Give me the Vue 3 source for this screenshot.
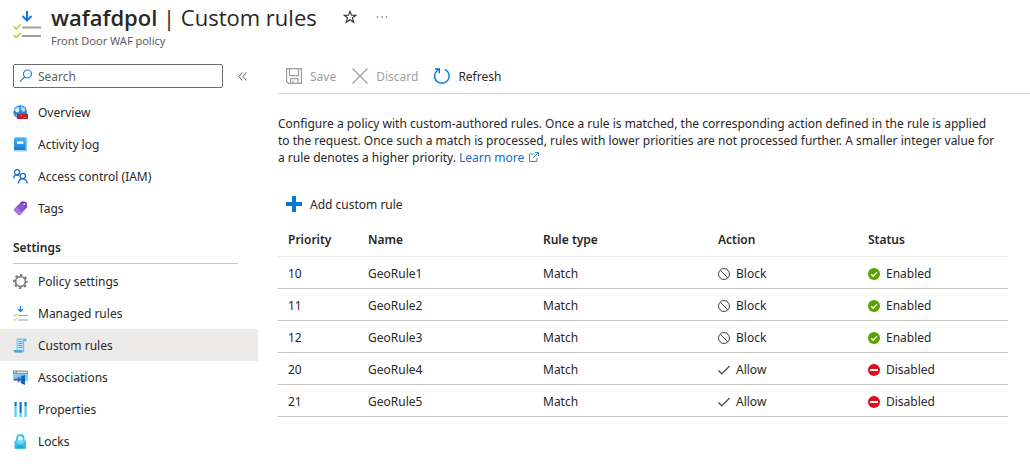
<script setup>
import { ref } from 'vue'

const search = ref('')

const general = [
  { label: 'Overview', icon: 'overview' },
  { label: 'Activity log', icon: 'log' },
  { label: 'Access control (IAM)', icon: 'iam' },
  { label: 'Tags', icon: 'tag' },
]
const settings = [
  { label: 'Policy settings', icon: 'gear' },
  { label: 'Managed rules', icon: 'managed' },
  { label: 'Custom rules', icon: 'custom', active: true },
  { label: 'Associations', icon: 'assoc' },
  { label: 'Properties', icon: 'props' },
  { label: 'Locks', icon: 'lock' },
]
const groups = [
  { title: '', items: general },
  { title: 'Settings', items: settings },
]
const rules = [
  { priority: 10, name: 'GeoRule1', type: 'Match', action: 'Block', status: 'Enabled' },
  { priority: 11, name: 'GeoRule2', type: 'Match', action: 'Block', status: 'Enabled' },
  { priority: 12, name: 'GeoRule3', type: 'Match', action: 'Block', status: 'Enabled' },
  { priority: 20, name: 'GeoRule4', type: 'Match', action: 'Allow', status: 'Disabled' },
  { priority: 21, name: 'GeoRule5', type: 'Match', action: 'Allow', status: 'Disabled' },
]
</script>

<template>
  <div class="page">
    <header class="header">
      <svg class="header-icon" viewBox="0 0 28 28" fill="none">
        <path d="M14 1v9M9.500 6l4.500 4.500L18.500 6" stroke="#0f78d4" stroke-width="2" />
        <path d="M9 17.500h19M9 26h19" stroke="#a0a0a0" stroke-width="2" />
        <path d="M.7 16.500l2.500 2.500 4.500-4.500M.7 25l2.500 2.500 4.500-4.500" stroke="#b4d335" stroke-width="1.600" />
      </svg>
      <div class="heading">
        <div class="title-row">
          <h1><strong>wafafdpol</strong> | Custom rules</h1>
          <button class="icon-btn star" type="button" aria-label="Favorite">
            <svg width="14" height="14" viewBox="0 0 14 14" fill="none" stroke="#323130" stroke-width="1.100">
              <path d="M7 1.300l1.500 4h4.300L9.400 8l1.300 4.300L7 9.700l-3.700 2.600L4.600 8 1.200 5.300h4.300z" />
            </svg>
          </button>
          <button class="icon-btn" type="button" aria-label="More">
            <svg width="12" height="4" viewBox="0 0 12 4" fill="#605e5c">
              <circle cx="1.500" cy="2" r=".8" /><circle cx="6" cy="2" r=".8" /><circle cx="10.500" cy="2" r=".8" />
            </svg>
          </button>
        </div>
        <p class="subtitle">Front Door WAF policy</p>
      </div>
    </header>

    <div class="body">
      <aside class="sidebar">
        <div class="search-row">
          <label class="search">
            <svg width="14" height="14" viewBox="0 0 14 14" fill="none" stroke="#1f7fd6" stroke-width="1.200">
              <circle cx="8.500" cy="5" r="4" /><path d="M5.600 7.900L1 12.600" />
            </svg>
            <input v-model="search" type="text" placeholder="Search" aria-label="Search">
          </label>
          <button class="icon-btn" type="button" aria-label="Collapse menu">
            <svg width="9" height="9" viewBox="0 0 9 9" fill="none" stroke="#605e5c">
              <path d="M4.300.5l-3.500 4 3.500 4M8.300.5l-3.500 4 3.500 4" />
            </svg>
          </button>
        </div>

        <nav v-for="g in groups" :key="g.title">
          <h2 v-if="g.title" class="group-title">{{ g.title }}</h2>
          <a v-for="item in g.items" :key="item.label" href="#" class="nav-item" :class="{ active: item.active }">
            <svg v-if="item.icon === 'overview'" class="nav-icon" viewBox="0 0 15 15" fill="none">
              <circle cx="7.200" cy="7" r="6.800" fill="#1b86dc" />
              <path d="M1 5l3-3.500 3 1-2 3-3 1zM8 1l4 2-1.500 3-3-1.500z" fill="#9bd3fa" />
              <circle cx="4.500" cy="5.500" r="2" fill="#d8effd" />
              <circle cx="10.500" cy="5" r="1.800" fill="#b9e1fc" />
              <path d="M1.500 9.500l4 .5-.5 3z" fill="#7cc3f6" />
              <path d="M4 8.800h11V14H4z" fill="#d0242a" />
              <path d="M4 11.200h3M9.500 8.800v2.400h5.500M8 14v-2.500M12 14v-2.500" stroke="#a3141b" stroke-width=".7" />
              <path d="M7.500 10.200l1.500 1M11.500 12.500h1.500" stroke="#f5a3a5" stroke-width=".8" />
            </svg>
            <svg v-else-if="item.icon === 'log'" class="nav-icon" viewBox="0 0 15 15" fill="none">
              <defs>
                <linearGradient id="logFill" x1="0" y1="0" x2="0" y2="1">
                  <stop stop-color="#52b4f0" /><stop offset="1" stop-color="#0b78d2" />
                </linearGradient>
              </defs>
              <rect x="2.500" y=".5" width="11.500" height="14" rx="1" fill="#7cc6f2" />
              <path d="M1 1.500Q1 .5 2 .5h10.500V14H2.500Q1 14 1 12.800z" fill="url(#logFill)" />
              <path d="M1.500 13.500h11.500" stroke="#d4ecfa" stroke-width=".8" />
              <rect x="4" y="4.500" width="6.500" height="2.200" rx=".5" fill="#fff" />
            </svg>
            <svg v-else-if="item.icon === 'iam'" class="nav-icon" viewBox="0 0 15 15" fill="none" stroke="#1a6fd8" stroke-width="1.300">
              <circle cx="4" cy="3.200" r="2.500" /><path d="M.6 9.500Q.8 6 4 5.800q1.500 0 2.300.8" />
              <circle cx="9.700" cy="7" r="2.700" /><path d="M5.500 14.500q.3-4.700 4.200-4.700t4.500 4.700" />
            </svg>
            <svg v-else-if="item.icon === 'tag'" class="nav-icon" viewBox="0 0 15 15" fill="none">
              <path d="M1 8.200L8 1q.6-.6 1.500-.5l3.200.4q1 .1 1 1v4.300q0 .8-.6 1.400L7 14q-.7.600-1.300 0L1 9.600q-.6-.7 0-1.400z" fill="#8b55d4" />
              <path d="M1 9.600L5.700 14q.6.600 1.300 0l2.500-2.500L3.500 6z" fill="#a779e0" />
              <path d="M7.500 1.500L13 7l.7-1V2q0-1-1-1.100L9.500.5z" fill="#6c38b8" />
              <circle cx="11.200" cy="3.300" r="1" fill="#efe5fb" />
            </svg>
            <svg v-else-if="item.icon === 'gear'" class="nav-icon" viewBox="0 0 15 15" fill="none">
              <circle cx="7.500" cy="7.500" r="6.400" stroke="#7a7a7a" stroke-width="2" stroke-dasharray="2.513 2.513" stroke-dashoffset="1.256" />
              <circle cx="7.500" cy="7.500" r="4.900" stroke="#808080" stroke-width="1.700" />
            </svg>
            <svg v-else-if="item.icon === 'managed'" class="nav-icon" viewBox="0 0 15 15" fill="none">
              <path d="M7.500 0v5.300M5 3l2.500 2.500L10 3" stroke="#0f78d4" stroke-width="1.200" />
              <path d="M5 9.500h10M5 14h10" stroke="#a0a0a0" />
              <path d="M.4 8.700l1.500 1.500 2.300-2.300M.4 13l1.500 1.500 2.300-2.300" stroke="#b4d335" />
            </svg>
            <svg v-else-if="item.icon === 'custom'" class="nav-icon" viewBox="0 0 15 15" fill="none">
              <path d="M3.500.5H12q-.8.600-.8 2v10.500q0 1.500-1.500 1.500H2.500q1-.5 1-2z" fill="#7cc4e6" />
              <path d="M4.500 2h5.500v10H4.500z" fill="#bfe6f7" />
              <path d="M5.500 3.500h4M5.500 5.500h4M5.500 7.500h4M5.500 9.500h4" stroke="#3c9bc8" stroke-width=".9" />
              <path d="M12 .5q1.700 0 1.700 1.500 0 1.300-1.500 1.300h-1V2q0-1.500.8-1.500z" fill="#4fa9d3" />
              <path d="M.5 12h8.200q-.3 2.500 1.300 2.500H2.300Q.5 14.500.5 12z" fill="#4aa8d4" />
            </svg>
            <svg v-else-if="item.icon === 'assoc'" class="nav-icon" viewBox="0 0 15 15" fill="none">
              <path d="M0 1h15v10H0z" fill="#86ccee" />
              <path d="M0 .5h15V4H0z" fill="#8c969d" />
              <path d="M1 1.700h1.500v1H1zM4 1.700h10v1H4z" fill="#fff" />
              <path d="M7.500 5.500H12V13H7.500z" fill="#2a8fe0" />
              <path d="M8.500 6.500L12 5v10l-3.500-1.500z" fill="#0a62bd" />
              <path d="M1 9.500h6M4.700 7l2.500 2.500L4.700 12" stroke="#7b3fa8" stroke-width="1.300" />
            </svg>
            <svg v-else-if="item.icon === 'props'" class="nav-icon" viewBox="0 0 15 15">
              <path d="M1.500 5h2.200v10H1.500zM6.500 12h2.200v3H6.500zM11.500 5h2.200v10h-2.200z" fill="#45d3f2" />
              <path d="M1.500 0h2.200v4.500H1.500zM6.500 0h2.200v11.500H6.500zM11.500 0h2.200v4.500h-2.200z" fill="#0b76d3" />
            </svg>
            <svg v-else class="nav-icon" viewBox="0 0 15 15" fill="none">
              <path d="M4 7V4.500Q4 1 7.300 1t3.300 3.500V7" stroke="#3fc4e6" stroke-width="1.900" />
              <rect x="1.500" y="6.500" width="11.500" height="8.300" rx=".7" fill="#35bfe6" />
              <path d="M1.500 7l5.800 4L13 7z" fill="#63dbf5" />
              <path d="M1.700 14.500l5.600-4 5.500 4z" fill="#22a7d6" />
            </svg>
            <span>{{ item.label }}</span>
          </a>
        </nav>
      </aside>

      <main class="content">
        <div class="toolbar">
          <button class="cmd" type="button" disabled>
            <svg width="16" height="16" viewBox="0 0 16 16" fill="none" stroke="#a19f9d" stroke-width="1.200">
              <path d="M.6.600h14.800v14.800H2.600l-2-2zM3.500.600v7h9v-7M4.500 15.400v-4.800h7.500v4.800M7 12.500v2.500" />
            </svg>
            <span>Save</span>
          </button>
          <button class="cmd" type="button" disabled>
            <svg width="16" height="16" viewBox="0 0 16 16" fill="none" stroke="#a19f9d" stroke-width="1.300">
              <path d="M.5.500l15 15M15.500.500l-15 15" />
            </svg>
            <span>Discard</span>
          </button>
          <button class="cmd" type="button">
            <svg width="16" height="18" viewBox="0 0 16 18" fill="none" stroke="#0078d4" stroke-width="1.400">
              <path d="M10.800 2.300A7.300 7.300 0 1 1 4.500 2.500M1 2h4.300v4.300" />
            </svg>
            <span>Refresh</span>
          </button>
        </div>

        <p class="intro">
          Configure a policy with custom-authored rules. Once a rule is matched, the corresponding action defined in the rule is applied to the request. Once such a match is processed, rules with lower priorities are not processed further. A smaller integer value for a rule denotes a higher priority.
          <a href="#" class="learn">Learn more<svg width="10" height="10" viewBox="0 0 10 10" fill="none" stroke="#3f86dc">
            <path d="M4 2H.5v7.500H8V6M6 .5h3.500V4M9.500.500L4 6" />
          </svg></a>
        </p>

        <button class="add" type="button">
          <svg width="16" height="16" viewBox="0 0 16 16" fill="#0078d4"><path d="M6 0h4v6h6v4h-6v6H6v-6H0V6h6z" /></svg>
          <span>Add custom rule</span>
        </button>

        <table>
          <colgroup><col class="c-priority"><col class="c-wide"><col class="c-wide"><col class="c-mid"><col></colgroup>
          <thead>
            <tr><th>Priority</th><th>Name</th><th>Rule type</th><th>Action</th><th>Status</th></tr>
          </thead>
          <tbody>
            <tr v-for="r in rules" :key="r.priority">
              <td>{{ r.priority }}</td>
              <td>{{ r.name }}</td>
              <td>{{ r.type }}</td>
              <td>
                <span class="cell">
                  <svg v-if="r.action === 'Block'" width="12" height="12" viewBox="0 0 12 12" fill="none" stroke="#484644">
                    <circle cx="6" cy="6" r="5.500" /><path d="M2.100 2.100l7.800 7.800" />
                  </svg>
                  <svg v-else width="12" height="12" viewBox="0 0 12 12" fill="none" stroke="#484644" stroke-width="1.200">
                    <path d="M.4 6.500l3.400 3.300L11.600 2" />
                  </svg>
                  {{ r.action }}
                </span>
              </td>
              <td>
                <span class="cell">
                  <svg v-if="r.status === 'Enabled'" width="12" height="12" viewBox="0 0 12 12" fill="none">
                    <circle cx="6" cy="6" r="6" fill="#57a300" /><path d="M3.200 6.200l2 2 3.700-4" stroke="#fff" stroke-width="1.500" />
                  </svg>
                  <svg v-else width="12" height="12" viewBox="0 0 12 12">
                    <circle cx="6" cy="6" r="6" fill="#e00b1c" /><path d="M2 5h8v2H2z" fill="#fff" />
                  </svg>
                  {{ r.status }}
                </span>
              </td>
            </tr>
          </tbody>
        </table>
      </main>
    </div>
  </div>
</template>

<style>
body {
  background: #fff;
}
</style>

<style scoped>
.page {
  font: 12px/16px "Noto Sans", "Open Sans", sans-serif;
  color: #292827;
}
svg {
  display: block;
  flex: none;
}
button {
  font: inherit;
  color: inherit;
  background: none;
  border: 0;
  padding: 0;
}
a {
  color: inherit;
  text-decoration: none;
}
.header {
  display: flex;
  gap: 10px;
  height: 64px;
  padding-left: 13px;
}
.header-icon {
  width: 28px;
  height: 28px;
  margin-top: 10px;
}
.title-row {
  display: flex;
  align-items: center;
  height: 34px;
}
h1 {
  margin: 0;
  font-family: "Open Sans", "Noto Sans", sans-serif;
  font-size: 22px;
  line-height: 34px;
  font-weight: 400;
  white-space: nowrap;
}
h1 strong {
  font-weight: 600;
}
.star {
  margin: 0 19px 0 26px;
}
.subtitle {
  margin: 0;
  font-size: 11px;
  line-height: 14px;
  color: #605e5c;
}
.body {
  display: flex;
}
.sidebar {
  width: 258px;
  flex: none;
}
.search-row {
  display: flex;
  align-items: center;
  gap: 15px;
  padding: 0 0 8px 13px;
}
.search {
  display: flex;
  align-items: center;
  gap: 5px;
  width: 210px;
  height: 24px;
  box-sizing: border-box;
  border: 1px solid #6f6d6b;
  border-radius: 2px;
  padding: 0 5px;
}
.search input {
  flex: 1;
  min-width: 0;
  border: 0;
  padding: 2px 0 0;
  outline: none;
  background: none;
  font: inherit;
  color: inherit;
}
.search input::placeholder {
  color: #605e5c;
  opacity: 1;
}
.group-title {
  margin: 0 20px 1px 13px;
  padding: 16px 0 7px;
  border-bottom: 1px solid #c8c6c4;
  font-size: 12px;
  line-height: 16px;
  font-weight: 600;
}
.nav-item {
  display: flex;
  align-items: center;
  gap: 10px;
  height: 32px;
  padding-left: 13px;
}
.nav-item span,
.cmd span,
.add span {
  padding-top: 2px;
}
.nav-item.active {
  background: #edebe9;
}
.nav-icon {
  width: 15px;
  height: 15px;
}
.content {
  flex: 1;
  min-width: 0;
  padding-left: 20px;
}
.toolbar {
  display: flex;
  gap: 16px;
  height: 29px;
  padding-left: 8px;
  align-items: flex-start;
  border-bottom: 1px solid #d2d0ce;
}
.cmd,
.add {
  display: flex;
  align-items: center;
  gap: 8px;
  height: 24px;
}
.cmd:disabled {
  color: #a19f9d;
}
.intro {
  margin: 21px 32px 0 0;
  line-height: 17px;
}
.learn {
  color: #0f6cd0;
}
.learn svg {
  display: inline-block;
  margin-left: 5px;
}
.add {
  margin: 26px 0 8px 8px;
}
table {
  width: calc(100% - 22px);
  table-layout: fixed;
  border-collapse: collapse;
}
.c-priority {
  width: 80px;
}
.c-wide {
  width: 175px;
}
.c-mid {
  width: 150px;
}
th,
td {
  box-sizing: border-box;
  height: 32px;
  padding: 4px 10px 0;
  text-align: left;
  border-bottom: 1px solid #c8c6c4;
}
th {
  padding-top: 0;
  font-weight: 600;
  border-bottom-color: #edebe9;
}
.cell {
  display: flex;
  align-items: center;
  gap: 6px;
}
</style>
